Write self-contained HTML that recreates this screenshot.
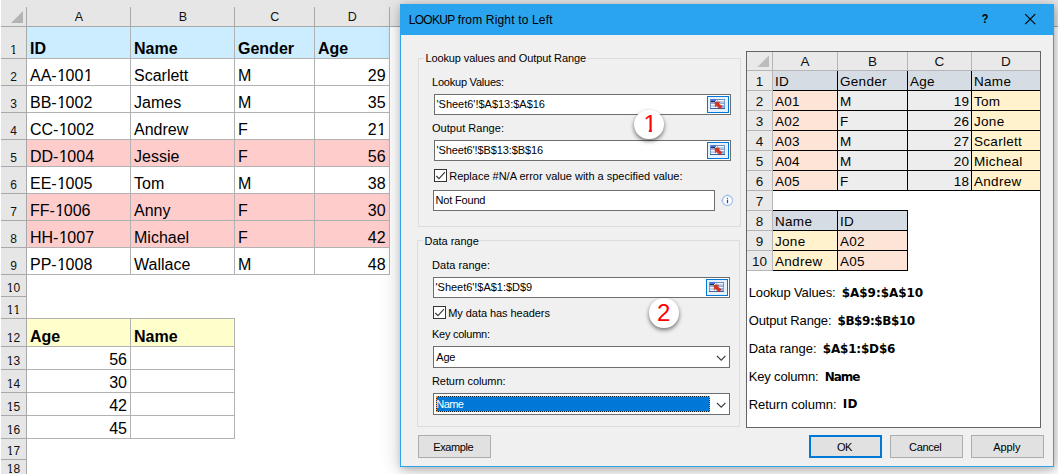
<!DOCTYPE html>
<html lang="en"><head><meta charset="utf-8"><title>LOOKUP from Right to Left</title>
<style>
html,body{margin:0;padding:0}
body{width:1058px;height:474px;position:relative;overflow:hidden;background:#fff;font-family:"Liberation Sans",sans-serif;color:#000}
.a{position:absolute;box-sizing:content-box}
.t{position:absolute;white-space:pre}
.o{display:inline-block;position:relative;left:.6px;clip-path:polygon(0 0,100% 0,100% 10.5px,5.6px 10.5px,5.6px 100%,3.2px 100%,3.2px 10.5px,0 10.5px)}
</style></head>
<body>
<div class="a" style="left:1px;top:0px;width:1057px;height:26px;background:#e6e6e6;"></div>
<div class="a" style="left:1px;top:26px;width:1057px;height:1px;background:#a9a9a9;"></div>
<div class="a" style="left:1px;top:27px;width:25px;height:447px;background:#e6e6e6;"></div>
<div class="a" style="left:26px;top:7px;width:1px;height:467px;background:#a9a9a9;"></div>
<svg class="a" style="left:10px;top:10px" width="14" height="14"><polygon points="13,1 13,13 1,13" fill="#b3b3b3"/></svg>
<div class="a" style="left:130px;top:7px;width:1px;height:19px;background:#a9a9a9;"></div>
<div class="a" style="left:234px;top:7px;width:1px;height:19px;background:#a9a9a9;"></div>
<div class="a" style="left:314px;top:7px;width:1px;height:19px;background:#a9a9a9;"></div>
<div class="a" style="left:389px;top:7px;width:1px;height:19px;background:#a9a9a9;"></div>
<span class="t" style='left:74.63px;top:10.82px;font-size:12.5px;line-height:12.5px;color:#111;'>A</span>
<span class="t" style='left:178.63px;top:10.82px;font-size:12.5px;line-height:12.5px;color:#111;'>B</span>
<span class="t" style='left:270.28px;top:10.82px;font-size:12.5px;line-height:12.5px;color:#111;'>C</span>
<span class="t" style='left:347.78px;top:10.82px;font-size:12.5px;line-height:12.5px;color:#111;'>D</span>
<div class="a" style="left:1px;top:58px;width:25px;height:1px;background:#a9a9a9;"></div>
<div class="a" style="left:1px;top:85px;width:25px;height:1px;background:#a9a9a9;"></div>
<div class="a" style="left:1px;top:112px;width:25px;height:1px;background:#a9a9a9;"></div>
<div class="a" style="left:1px;top:139px;width:25px;height:1px;background:#a9a9a9;"></div>
<div class="a" style="left:1px;top:166px;width:25px;height:1px;background:#a9a9a9;"></div>
<div class="a" style="left:1px;top:193px;width:25px;height:1px;background:#a9a9a9;"></div>
<div class="a" style="left:1px;top:220px;width:25px;height:1px;background:#a9a9a9;"></div>
<div class="a" style="left:1px;top:247px;width:25px;height:1px;background:#a9a9a9;"></div>
<div class="a" style="left:1px;top:274px;width:25px;height:1px;background:#a9a9a9;"></div>
<div class="a" style="left:1px;top:296px;width:25px;height:1px;background:#a9a9a9;"></div>
<div class="a" style="left:1px;top:318px;width:25px;height:1px;background:#a9a9a9;"></div>
<div class="a" style="left:1px;top:346px;width:25px;height:1px;background:#a9a9a9;"></div>
<div class="a" style="left:1px;top:369px;width:25px;height:1px;background:#a9a9a9;"></div>
<div class="a" style="left:1px;top:392px;width:25px;height:1px;background:#a9a9a9;"></div>
<div class="a" style="left:1px;top:415px;width:25px;height:1px;background:#a9a9a9;"></div>
<div class="a" style="left:1px;top:438px;width:25px;height:1px;background:#a9a9a9;"></div>
<div class="a" style="left:1px;top:459px;width:25px;height:1px;background:#a9a9a9;"></div>
<span class="t" style='left:10.16px;top:43.84px;font-size:12px;line-height:12px;color:#111;clip-path:polygon(0 0,100% 0,100% 9.1px,5px 9.1px,5px 100%,2.6px 100%,2.6px 9.1px,0 9.1px);'>1</span>
<span class="t" style='left:10.16px;top:70.84px;font-size:12px;line-height:12px;color:#111;'>2</span>
<span class="t" style='left:10.16px;top:97.84px;font-size:12px;line-height:12px;color:#111;'>3</span>
<span class="t" style='left:10.16px;top:124.84px;font-size:12px;line-height:12px;color:#111;'>4</span>
<span class="t" style='left:10.16px;top:151.84px;font-size:12px;line-height:12px;color:#111;'>5</span>
<span class="t" style='left:10.16px;top:178.84px;font-size:12px;line-height:12px;color:#111;'>6</span>
<span class="t" style='left:10.16px;top:205.84px;font-size:12px;line-height:12px;color:#111;'>7</span>
<span class="t" style='left:10.16px;top:232.84px;font-size:12px;line-height:12px;color:#111;'>8</span>
<span class="t" style='left:10.16px;top:259.84px;font-size:12px;line-height:12px;color:#111;'>9</span>
<span class="t" style='left:6.83px;top:281.84px;font-size:12px;line-height:12px;color:#111;clip-path:polygon(0 0,100% 0,100% 9.1px,5px 9.1px,5px 100%,2.6px 100%,2.6px 9.1px,0 9.1px);'>1</span>
<span class="t" style='left:13.50px;top:281.84px;font-size:12px;line-height:12px;color:#111;'>0</span>
<span class="t" style='left:6.83px;top:303.84px;font-size:12px;line-height:12px;color:#111;clip-path:polygon(0 0,100% 0,100% 9.1px,5px 9.1px,5px 100%,2.6px 100%,2.6px 9.1px,0 9.1px);'>1</span>
<span class="t" style='left:13.50px;top:303.84px;font-size:12px;line-height:12px;color:#111;clip-path:polygon(0 0,100% 0,100% 9.1px,5px 9.1px,5px 100%,2.6px 100%,2.6px 9.1px,0 9.1px);'>1</span>
<span class="t" style='left:6.83px;top:331.84px;font-size:12px;line-height:12px;color:#111;clip-path:polygon(0 0,100% 0,100% 9.1px,5px 9.1px,5px 100%,2.6px 100%,2.6px 9.1px,0 9.1px);'>1</span>
<span class="t" style='left:13.50px;top:331.84px;font-size:12px;line-height:12px;color:#111;'>2</span>
<span class="t" style='left:6.83px;top:354.84px;font-size:12px;line-height:12px;color:#111;clip-path:polygon(0 0,100% 0,100% 9.1px,5px 9.1px,5px 100%,2.6px 100%,2.6px 9.1px,0 9.1px);'>1</span>
<span class="t" style='left:13.50px;top:354.84px;font-size:12px;line-height:12px;color:#111;'>3</span>
<span class="t" style='left:6.83px;top:377.84px;font-size:12px;line-height:12px;color:#111;clip-path:polygon(0 0,100% 0,100% 9.1px,5px 9.1px,5px 100%,2.6px 100%,2.6px 9.1px,0 9.1px);'>1</span>
<span class="t" style='left:13.50px;top:377.84px;font-size:12px;line-height:12px;color:#111;'>4</span>
<span class="t" style='left:6.83px;top:400.84px;font-size:12px;line-height:12px;color:#111;clip-path:polygon(0 0,100% 0,100% 9.1px,5px 9.1px,5px 100%,2.6px 100%,2.6px 9.1px,0 9.1px);'>1</span>
<span class="t" style='left:13.50px;top:400.84px;font-size:12px;line-height:12px;color:#111;'>5</span>
<span class="t" style='left:6.83px;top:423.84px;font-size:12px;line-height:12px;color:#111;clip-path:polygon(0 0,100% 0,100% 9.1px,5px 9.1px,5px 100%,2.6px 100%,2.6px 9.1px,0 9.1px);'>1</span>
<span class="t" style='left:13.50px;top:423.84px;font-size:12px;line-height:12px;color:#111;'>6</span>
<span class="t" style='left:6.83px;top:444.84px;font-size:12px;line-height:12px;color:#111;clip-path:polygon(0 0,100% 0,100% 9.1px,5px 9.1px,5px 100%,2.6px 100%,2.6px 9.1px,0 9.1px);'>1</span>
<span class="t" style='left:13.50px;top:444.84px;font-size:12px;line-height:12px;color:#111;'>7</span>
<span class="t" style='left:6.83px;top:462.84px;font-size:12px;line-height:12px;color:#111;clip-path:polygon(0 0,100% 0,100% 9.1px,5px 9.1px,5px 100%,2.6px 100%,2.6px 9.1px,0 9.1px);'>1</span>
<span class="t" style='left:13.50px;top:462.84px;font-size:12px;line-height:12px;color:#111;'>8</span>
<div class="a" style="left:27px;top:27px;width:362px;height:31px;background:#ccecff;"></div>
<div class="a" style="left:27px;top:140px;width:362px;height:26px;background:#ffcccc;"></div>
<div class="a" style="left:27px;top:194px;width:362px;height:26px;background:#ffcccc;"></div>
<div class="a" style="left:27px;top:221px;width:362px;height:26px;background:#ffcccc;"></div>
<div class="a" style="left:27px;top:58px;width:363px;height:1px;background:#b2b2b2;"></div>
<div class="a" style="left:27px;top:85px;width:363px;height:1px;background:#b2b2b2;"></div>
<div class="a" style="left:27px;top:112px;width:363px;height:1px;background:#b2b2b2;"></div>
<div class="a" style="left:27px;top:139px;width:363px;height:1px;background:#b2b2b2;"></div>
<div class="a" style="left:27px;top:166px;width:363px;height:1px;background:#b2b2b2;"></div>
<div class="a" style="left:27px;top:193px;width:363px;height:1px;background:#b2b2b2;"></div>
<div class="a" style="left:27px;top:220px;width:363px;height:1px;background:#b2b2b2;"></div>
<div class="a" style="left:27px;top:247px;width:363px;height:1px;background:#b2b2b2;"></div>
<div class="a" style="left:27px;top:274px;width:363px;height:1px;background:#b2b2b2;"></div>
<div class="a" style="left:130px;top:27px;width:1px;height:248px;background:#b2b2b2;"></div>
<div class="a" style="left:234px;top:27px;width:1px;height:248px;background:#b2b2b2;"></div>
<div class="a" style="left:314px;top:27px;width:1px;height:248px;background:#b2b2b2;"></div>
<div class="a" style="left:389px;top:27px;width:1px;height:248px;background:#b2b2b2;"></div>
<div class="a" style="left:27px;top:319px;width:207px;height:27px;background:#ffffcc;"></div>
<div class="a" style="left:27px;top:318px;width:208px;height:1px;background:#b2b2b2;"></div>
<div class="a" style="left:27px;top:346px;width:208px;height:1px;background:#b2b2b2;"></div>
<div class="a" style="left:27px;top:369px;width:208px;height:1px;background:#b2b2b2;"></div>
<div class="a" style="left:27px;top:392px;width:208px;height:1px;background:#b2b2b2;"></div>
<div class="a" style="left:27px;top:415px;width:208px;height:1px;background:#b2b2b2;"></div>
<div class="a" style="left:27px;top:438px;width:208px;height:1px;background:#b2b2b2;"></div>
<div class="a" style="left:130px;top:318px;width:1px;height:121px;background:#b2b2b2;"></div>
<div class="a" style="left:234px;top:318px;width:1px;height:121px;background:#b2b2b2;"></div>
<span class="t" style='left:30.00px;top:41.46px;font-size:16px;line-height:16px;font-weight:bold;'>ID</span>
<span class="t" style='left:134.00px;top:41.46px;font-size:16px;line-height:16px;font-weight:bold;'>Name</span>
<span class="t" style='left:238.00px;top:41.46px;font-size:16px;line-height:16px;font-weight:bold;'>Gender</span>
<span class="t" style='left:318.00px;top:41.46px;font-size:16px;line-height:16px;font-weight:bold;'>Age</span>
<span class="t" style='left:30.00px;top:68.46px;font-size:16px;line-height:16px;'>AA-<span class="o">1</span>00<span class="o">1</span></span>
<span class="t" style='left:134.00px;top:68.46px;font-size:16px;line-height:16px;'>Scarlett</span>
<span class="t" style='left:238.00px;top:68.46px;font-size:16px;line-height:16px;'>M</span>
<span class="t" style='left:367.80px;top:68.46px;font-size:16px;line-height:16px;'>29</span>
<span class="t" style='left:30.00px;top:95.46px;font-size:16px;line-height:16px;'>BB-<span class="o">1</span>002</span>
<span class="t" style='left:134.00px;top:95.46px;font-size:16px;line-height:16px;'>James</span>
<span class="t" style='left:238.00px;top:95.46px;font-size:16px;line-height:16px;'>M</span>
<span class="t" style='left:367.80px;top:95.46px;font-size:16px;line-height:16px;'>35</span>
<span class="t" style='left:30.00px;top:122.46px;font-size:16px;line-height:16px;'>CC-<span class="o">1</span>002</span>
<span class="t" style='left:134.00px;top:122.46px;font-size:16px;line-height:16px;'>Andrew</span>
<span class="t" style='left:238.00px;top:122.46px;font-size:16px;line-height:16px;'>F</span>
<span class="t" style='left:367.80px;top:122.46px;font-size:16px;line-height:16px;'>2<span class="o">1</span></span>
<span class="t" style='left:30.00px;top:149.46px;font-size:16px;line-height:16px;'>DD-<span class="o">1</span>004</span>
<span class="t" style='left:134.00px;top:149.46px;font-size:16px;line-height:16px;'>Jessie</span>
<span class="t" style='left:238.00px;top:149.46px;font-size:16px;line-height:16px;'>F</span>
<span class="t" style='left:367.80px;top:149.46px;font-size:16px;line-height:16px;'>56</span>
<span class="t" style='left:30.00px;top:176.46px;font-size:16px;line-height:16px;'>EE-<span class="o">1</span>005</span>
<span class="t" style='left:134.00px;top:176.46px;font-size:16px;line-height:16px;'>Tom</span>
<span class="t" style='left:238.00px;top:176.46px;font-size:16px;line-height:16px;'>M</span>
<span class="t" style='left:367.80px;top:176.46px;font-size:16px;line-height:16px;'>38</span>
<span class="t" style='left:30.00px;top:203.46px;font-size:16px;line-height:16px;'>FF-<span class="o">1</span>006</span>
<span class="t" style='left:134.00px;top:203.46px;font-size:16px;line-height:16px;'>Anny</span>
<span class="t" style='left:238.00px;top:203.46px;font-size:16px;line-height:16px;'>F</span>
<span class="t" style='left:367.80px;top:203.46px;font-size:16px;line-height:16px;'>30</span>
<span class="t" style='left:30.00px;top:230.46px;font-size:16px;line-height:16px;'>HH-<span class="o">1</span>007</span>
<span class="t" style='left:134.00px;top:230.46px;font-size:16px;line-height:16px;'>Michael</span>
<span class="t" style='left:238.00px;top:230.46px;font-size:16px;line-height:16px;'>F</span>
<span class="t" style='left:367.80px;top:230.46px;font-size:16px;line-height:16px;'>42</span>
<span class="t" style='left:30.00px;top:257.46px;font-size:16px;line-height:16px;'>PP-<span class="o">1</span>008</span>
<span class="t" style='left:134.00px;top:257.46px;font-size:16px;line-height:16px;'>Wallace</span>
<span class="t" style='left:238.00px;top:257.46px;font-size:16px;line-height:16px;'>M</span>
<span class="t" style='left:367.80px;top:257.46px;font-size:16px;line-height:16px;'>48</span>
<span class="t" style='left:30.00px;top:329.46px;font-size:16px;line-height:16px;font-weight:bold;'>Age</span>
<span class="t" style='left:134.00px;top:329.46px;font-size:16px;line-height:16px;font-weight:bold;'>Name</span>
<span class="t" style='left:109.20px;top:352.46px;font-size:16px;line-height:16px;'>56</span>
<span class="t" style='left:109.20px;top:375.46px;font-size:16px;line-height:16px;'>30</span>
<span class="t" style='left:109.20px;top:398.46px;font-size:16px;line-height:16px;'>42</span>
<span class="t" style='left:109.20px;top:421.46px;font-size:16px;line-height:16px;'>45</span>
<div class="a" style="left:400px;top:4px;width:652px;height:461px;border:1px solid #2ba4ef;background:#f0f0f0;box-shadow:0 3px 18px 0 rgba(0,0,0,.22),1px 2px 7px 0 rgba(0,0,0,.2)"></div>
<div class="a" style="left:401px;top:5px;width:652px;height:30px;background:#2ba4ef;"></div>
<span class="t" style='left:408.76px;top:13.84px;font-size:12px;line-height:12px;letter-spacing:-0.707px;'>LOOKUP</span>
<span class="t" style='left:457.66px;top:13.84px;font-size:12px;line-height:12px;letter-spacing:0.167px;'>from Right to Left</span>
<span class="t" style='left:980.98px;top:12.47px;font-size:13.5px;line-height:13.5px;font-weight:bold;transform:scaleX(.8);'>?</span>
<svg class="a" style="left:1023px;top:12px" width="14" height="14"><path d="M2.2 2.2 L12.2 12.2 M12.2 2.2 L2.2 12.2" stroke="#000" stroke-width="1.15" fill="none"/></svg>
<div class="a" style="left:418px;top:58px;width:321px;height:167px;border:1px solid #dcdcdc;background:transparent;"></div>
<div class="a" style="left:417px;top:240px;width:321px;height:185px;border:1px solid #dcdcdc;background:transparent;"></div>
<div class="a" style="left:424px;top:52px;width:163px;height:12px;background:#f0f0f0;"></div>
<div class="a" style="left:423px;top:234px;width:56px;height:12px;background:#f0f0f0;"></div>
<span class="t" style='left:425.40px;top:52.69px;font-size:11px;line-height:11px;letter-spacing:-0.111px;'>Lookup values and Output Range</span>
<span class="t" style='left:424.50px;top:236.09px;font-size:11px;line-height:11px;letter-spacing:-0.016px;'>Data range</span>
<div class="a" style="left:434px;top:94px;width:295px;height:19px;border:1px solid #6e6e6e;background:#fff;"></div>
<div class="a" style="left:434px;top:140px;width:295px;height:19px;border:1px solid #6e6e6e;background:#fff;"></div>
<div class="a" style="left:433px;top:190px;width:280px;height:19px;border:1px solid #6e6e6e;background:#fff;"></div>
<div class="a" style="left:433px;top:277px;width:295px;height:19px;border:1px solid #6e6e6e;background:#fff;"></div>
<div class="a" style="left:433px;top:346px;width:295px;height:20px;border:1px solid #6e6e6e;background:#fff;"></div>
<div class="a" style="left:433px;top:393px;width:295px;height:20px;border:1px solid #6e6e6e;background:#fff;"></div>
<span class="t" style='left:432.00px;top:76.69px;font-size:11px;line-height:11px;letter-spacing:-0.219px;'>Lookup Values:</span>
<span class="t" style='left:436.50px;top:98.69px;font-size:11px;line-height:11px;letter-spacing:-0.016px;'>'Sheet6'!$A$13:$A$16</span>
<span class="t" style='left:432.00px;top:122.69px;font-size:11px;line-height:11px;letter-spacing:0.036px;'>Output Range:</span>
<span class="t" style='left:436.50px;top:144.69px;font-size:11px;line-height:11px;letter-spacing:-0.121px;'>'Sheet6'!$B$13:$B$16</span>
<span class="t" style='left:449.20px;top:170.69px;font-size:11px;line-height:11px;letter-spacing:-0.006px;'>Replace #N/A error value with a specified value:</span>
<span class="t" style='left:435.50px;top:194.69px;font-size:11px;line-height:11px;letter-spacing:-0.173px;'>Not Found</span>
<span class="t" style='left:432.00px;top:259.69px;font-size:11px;line-height:11px;letter-spacing:0.051px;'>Data range:</span>
<span class="t" style='left:435.50px;top:281.69px;font-size:11px;line-height:11px;letter-spacing:-0.028px;'>'Sheet6'!$A$1:$D$9</span>
<span class="t" style='left:448.20px;top:307.69px;font-size:11px;line-height:11px;letter-spacing:-0.052px;'>My data has headers</span>
<span class="t" style='left:432.00px;top:328.69px;font-size:11px;line-height:11px;letter-spacing:-0.254px;'>Key column:</span>
<span class="t" style='left:436.31px;top:351.69px;font-size:11px;line-height:11px;letter-spacing:-0.194px;'>Age</span>
<span class="t" style='left:432.00px;top:375.69px;font-size:11px;line-height:11px;letter-spacing:-0.085px;'>Return column:</span>
<div class="a" style="left:436px;top:396px;width:274px;height:16px;background:#0078d7;"></div>
<div class="a" style="left:436px;top:396px;width:272px;height:14px;border:1px solid #222"></div><div class="a" style="left:436px;top:396px;width:272px;height:14px;border:1px dotted #ff9a3c"></div>
<span class="t" style='left:436.31px;top:398.69px;font-size:11px;line-height:11px;color:#fff;letter-spacing:-0.551px;'>Name</span>
<svg class="a" style="left:434px;top:169px" width="13" height="13"><rect x="0.5" y="0.5" width="12" height="12" fill="#fff" stroke="#333"/><path d="M2.3 7 L5 9.7 L10.9 3.2" fill="none" stroke="#3c3c3c" stroke-width="1.2"/></svg>
<svg class="a" style="left:433px;top:306px" width="13" height="13"><rect x="0.5" y="0.5" width="12" height="12" fill="#fff" stroke="#333"/><path d="M2.3 7 L5 9.7 L10.9 3.2" fill="none" stroke="#3c3c3c" stroke-width="1.2"/></svg>
<svg class="a" style="left:707px;top:96px" width="22" height="17">
<rect x="0.5" y="0.5" width="21" height="16" fill="#e5f1fb" stroke="#0078d7"/>
<rect x="3" y="3" width="15" height="10" fill="#f4f8fd"/>
<rect x="3" y="3" width="6" height="2" fill="#4478dc"/>
<rect x="3" y="5" width="5" height="1.4" fill="#1c2c5c"/>
<g fill="#6f8fc4"><rect x="9" y="3" width="9" height="1"/><rect x="3" y="7" width="15" height="0.9" opacity=".8"/><rect x="9" y="5.6" width="9" height="0.9"/><rect x="3" y="9.6" width="15" height="0.9" opacity=".8"/><rect x="3" y="3" width="0.9" height="10"/><rect x="10" y="3" width="0.8" height="10" opacity=".6"/><rect x="17.1" y="3" width="0.9" height="10"/></g>
<rect x="3" y="12" width="15" height="1" fill="#3f5f9f"/>
<rect x="14" y="9" width="4" height="3" fill="#7fa0dc" opacity=".7"/>
<path d="M8 6 L12.7 6.2 L11.5 7.5 L15.1 10.4 L12.8 13 L9.8 9.6 L8.3 11 Z" fill="#d9311d" stroke="#b3200f" stroke-width="0.4"/>
</svg>
<svg class="a" style="left:707px;top:142px" width="22" height="17">
<rect x="0.5" y="0.5" width="21" height="16" fill="#e5f1fb" stroke="#0078d7"/>
<rect x="3" y="3" width="15" height="10" fill="#f4f8fd"/>
<rect x="3" y="3" width="6" height="2" fill="#4478dc"/>
<rect x="3" y="5" width="5" height="1.4" fill="#1c2c5c"/>
<g fill="#6f8fc4"><rect x="9" y="3" width="9" height="1"/><rect x="3" y="7" width="15" height="0.9" opacity=".8"/><rect x="9" y="5.6" width="9" height="0.9"/><rect x="3" y="9.6" width="15" height="0.9" opacity=".8"/><rect x="3" y="3" width="0.9" height="10"/><rect x="10" y="3" width="0.8" height="10" opacity=".6"/><rect x="17.1" y="3" width="0.9" height="10"/></g>
<rect x="3" y="12" width="15" height="1" fill="#3f5f9f"/>
<rect x="14" y="9" width="4" height="3" fill="#7fa0dc" opacity=".7"/>
<path d="M8 6 L12.7 6.2 L11.5 7.5 L15.1 10.4 L12.8 13 L9.8 9.6 L8.3 11 Z" fill="#d9311d" stroke="#b3200f" stroke-width="0.4"/>
</svg>
<svg class="a" style="left:706px;top:279px" width="22" height="17">
<rect x="0.5" y="0.5" width="21" height="16" fill="#e5f1fb" stroke="#0078d7"/>
<rect x="3" y="3" width="15" height="10" fill="#f4f8fd"/>
<rect x="3" y="3" width="6" height="2" fill="#4478dc"/>
<rect x="3" y="5" width="5" height="1.4" fill="#1c2c5c"/>
<g fill="#6f8fc4"><rect x="9" y="3" width="9" height="1"/><rect x="3" y="7" width="15" height="0.9" opacity=".8"/><rect x="9" y="5.6" width="9" height="0.9"/><rect x="3" y="9.6" width="15" height="0.9" opacity=".8"/><rect x="3" y="3" width="0.9" height="10"/><rect x="10" y="3" width="0.8" height="10" opacity=".6"/><rect x="17.1" y="3" width="0.9" height="10"/></g>
<rect x="3" y="12" width="15" height="1" fill="#3f5f9f"/>
<rect x="14" y="9" width="4" height="3" fill="#7fa0dc" opacity=".7"/>
<path d="M8 6 L12.7 6.2 L11.5 7.5 L15.1 10.4 L12.8 13 L9.8 9.6 L8.3 11 Z" fill="#d9311d" stroke="#b3200f" stroke-width="0.4"/>
</svg>
<svg class="a" style="left:715.5px;top:355px" width="11" height="7"><path d="M1 1 L5.2 5.2 L9.4 1" fill="none" stroke="#404040" stroke-width="1.15"/></svg>
<svg class="a" style="left:715.5px;top:402px" width="11" height="7"><path d="M1 1 L5.2 5.2 L9.4 1" fill="none" stroke="#404040" stroke-width="1.15"/></svg>
<svg class="a" style="left:721px;top:194px" width="13" height="13"><rect x="5.6" y="0.4" width="2" height="1.6" fill="#a6c4ec"/><rect x="0.2" y="5.7" width="1.6" height="1.8" fill="#a6c4ec"/><circle cx="6.5" cy="6.5" r="5" fill="#fff" stroke="#a6c4ec" stroke-width="1.3"/><rect x="5.9" y="4" width="1.2" height="1.2" fill="#2a4a8a"/><rect x="5.9" y="5.9" width="1.2" height="3.3" fill="#2a4a8a"/></svg>
<div class="a" style="left:634.45px;top:109.75px;width:29.5px;height:29.5px;border-radius:50%;background:#fff;box-shadow:0 2px 4px rgba(0,0,0,.55)"></div>
<span class="t" style='left:643.62px;top:111.88px;font-size:24px;line-height:24px;color:#ff0000;clip-path:polygon(0 0,100% 0,100% 17.9px,8.2px 17.9px,8.2px 100%,5.2px 100%,5.2px 17.9px,0 17.9px);'>1</span>
<div class="a" style="left:649.45px;top:298.25px;width:29.5px;height:29.5px;border-radius:50%;background:#fff;box-shadow:0 2px 4px rgba(0,0,0,.55)"></div>
<span class="t" style='left:657.12px;top:301.28px;font-size:24px;line-height:24px;color:#ff0000;'>2</span>
<div class="a" style="left:418px;top:435px;width:71px;height:21px;border:1px solid #adadad;background:#e1e1e1;"></div>
<div class="a" style="left:809px;top:435px;width:69px;height:19px;border:2px solid #0078d7;background:#e1e1e1;"></div>
<div class="a" style="left:890px;top:435px;width:71px;height:21px;border:1px solid #adadad;background:#e1e1e1;"></div>
<div class="a" style="left:971px;top:435px;width:71px;height:21px;border:1px solid #adadad;background:#e1e1e1;"></div>
<span class="t" style='left:433.31px;top:441.69px;font-size:11px;line-height:11px;letter-spacing:-0.418px;'>Example</span>
<span class="t" style='left:836.90px;top:441.69px;font-size:11px;line-height:11px;letter-spacing:-0.516px;'>OK</span>
<span class="t" style='left:909.11px;top:441.69px;font-size:11px;line-height:11px;letter-spacing:-0.332px;'>Cancel</span>
<span class="t" style='left:993.30px;top:441.69px;font-size:11px;line-height:11px;letter-spacing:-0.085px;'>Apply</span>
<div class="a" style="left:746px;top:51px;width:293px;height:375px;border:1px solid #646464;background:#fff;"></div>
<div class="a" style="left:747px;top:52px;width:293px;height:18px;background:#e9e9e9;"></div>
<div class="a" style="left:747px;top:71px;width:25px;height:200px;background:#e9e9e9;"></div>
<svg class="a" style="left:756px;top:54px" width="14" height="14"><polygon points="13,1.5 13,13 1.5,13" fill="#bcbcbc"/></svg>
<div class="a" style="left:773px;top:71px;width:267px;height:19px;background:#d6dce4;"></div>
<div class="a" style="left:773px;top:91px;width:64px;height:99px;background:#fce4d6;"></div>
<div class="a" style="left:838px;top:91px;width:133px;height:99px;background:#ededed;"></div>
<div class="a" style="left:972px;top:91px;width:68px;height:99px;background:#fff2cc;"></div>
<div class="a" style="left:773px;top:211px;width:134px;height:19px;background:#d6dce4;"></div>
<div class="a" style="left:773px;top:231px;width:64px;height:39px;background:#fff2cc;"></div>
<div class="a" style="left:838px;top:231px;width:69px;height:39px;background:#fce4d6;"></div>
<div class="a" style="left:747px;top:70px;width:293px;height:1px;background:#b5b5b5;"></div>
<div class="a" style="left:772px;top:52px;width:1px;height:18px;background:#b5b5b5;"></div>
<div class="a" style="left:837px;top:52px;width:1px;height:18px;background:#b5b5b5;"></div>
<div class="a" style="left:907px;top:52px;width:1px;height:18px;background:#b5b5b5;"></div>
<div class="a" style="left:971px;top:52px;width:1px;height:18px;background:#b5b5b5;"></div>
<div class="a" style="left:772px;top:71px;width:1px;height:200px;background:#b5b5b5;"></div>
<div class="a" style="left:747px;top:90px;width:25px;height:1px;background:#b5b5b5;"></div>
<div class="a" style="left:747px;top:110px;width:25px;height:1px;background:#b5b5b5;"></div>
<div class="a" style="left:747px;top:130px;width:25px;height:1px;background:#b5b5b5;"></div>
<div class="a" style="left:747px;top:150px;width:25px;height:1px;background:#b5b5b5;"></div>
<div class="a" style="left:747px;top:170px;width:25px;height:1px;background:#b5b5b5;"></div>
<div class="a" style="left:747px;top:190px;width:25px;height:1px;background:#b5b5b5;"></div>
<div class="a" style="left:747px;top:210px;width:25px;height:1px;background:#b5b5b5;"></div>
<div class="a" style="left:747px;top:230px;width:25px;height:1px;background:#b5b5b5;"></div>
<div class="a" style="left:747px;top:250px;width:25px;height:1px;background:#b5b5b5;"></div>
<div class="a" style="left:747px;top:270px;width:25px;height:1px;background:#b5b5b5;"></div>
<div class="a" style="left:773px;top:90px;width:267px;height:1px;background:#000;"></div>
<div class="a" style="left:773px;top:110px;width:267px;height:1px;background:#000;"></div>
<div class="a" style="left:773px;top:130px;width:267px;height:1px;background:#000;"></div>
<div class="a" style="left:773px;top:150px;width:267px;height:1px;background:#000;"></div>
<div class="a" style="left:773px;top:170px;width:267px;height:1px;background:#000;"></div>
<div class="a" style="left:773px;top:190px;width:267px;height:1px;background:#000;"></div>
<div class="a" style="left:837px;top:71px;width:1px;height:120px;background:#000;"></div>
<div class="a" style="left:907px;top:71px;width:1px;height:120px;background:#000;"></div>
<div class="a" style="left:971px;top:71px;width:1px;height:120px;background:#000;"></div>
<div class="a" style="left:773px;top:210px;width:135px;height:1px;background:#000;"></div>
<div class="a" style="left:773px;top:230px;width:135px;height:1px;background:#000;"></div>
<div class="a" style="left:773px;top:250px;width:135px;height:1px;background:#000;"></div>
<div class="a" style="left:773px;top:270px;width:135px;height:1px;background:#000;"></div>
<div class="a" style="left:837px;top:210px;width:1px;height:61px;background:#000;"></div>
<div class="a" style="left:907px;top:210px;width:1px;height:61px;background:#000;"></div>
<span class="t" style='left:800.49px;top:55.17px;font-size:13.5px;line-height:13.5px;color:#111;'>A</span>
<span class="t" style='left:867.99px;top:55.17px;font-size:13.5px;line-height:13.5px;color:#111;'>B</span>
<span class="t" style='left:934.62px;top:55.17px;font-size:13.5px;line-height:13.5px;color:#111;'>C</span>
<span class="t" style='left:1001.12px;top:55.17px;font-size:13.5px;line-height:13.5px;color:#111;'>D</span>
<span class="t" style='left:755.74px;top:74.57px;font-size:13.5px;line-height:13.5px;color:#111;'>1</span>
<span class="t" style='left:755.74px;top:94.57px;font-size:13.5px;line-height:13.5px;color:#111;'>2</span>
<span class="t" style='left:755.74px;top:114.57px;font-size:13.5px;line-height:13.5px;color:#111;'>3</span>
<span class="t" style='left:755.74px;top:134.57px;font-size:13.5px;line-height:13.5px;color:#111;'>4</span>
<span class="t" style='left:755.74px;top:154.57px;font-size:13.5px;line-height:13.5px;color:#111;'>5</span>
<span class="t" style='left:755.74px;top:174.57px;font-size:13.5px;line-height:13.5px;color:#111;'>6</span>
<span class="t" style='left:755.74px;top:194.57px;font-size:13.5px;line-height:13.5px;color:#111;'>7</span>
<span class="t" style='left:755.74px;top:214.57px;font-size:13.5px;line-height:13.5px;color:#111;'>8</span>
<span class="t" style='left:755.74px;top:234.57px;font-size:13.5px;line-height:13.5px;color:#111;'>9</span>
<span class="t" style='left:751.98px;top:254.57px;font-size:13.5px;line-height:13.5px;color:#111;'>10</span>
<span class="t" style='left:775.00px;top:74.57px;font-size:13.5px;line-height:13.5px;letter-spacing:0.3px;'>ID</span>
<span class="t" style='left:840.00px;top:74.57px;font-size:13.5px;line-height:13.5px;letter-spacing:0.3px;'>Gender</span>
<span class="t" style='left:910.00px;top:74.57px;font-size:13.5px;line-height:13.5px;letter-spacing:0.3px;'>Age</span>
<span class="t" style='left:974.00px;top:74.57px;font-size:13.5px;line-height:13.5px;letter-spacing:0.3px;'>Name</span>
<span class="t" style='left:775.00px;top:94.57px;font-size:13.5px;line-height:13.5px;letter-spacing:0.3px;'>A01</span>
<span class="t" style='left:840.00px;top:94.57px;font-size:13.5px;line-height:13.5px;letter-spacing:0.3px;'>M</span>
<span class="t" style='left:953.77px;top:94.57px;font-size:13.5px;line-height:13.5px;letter-spacing:0.2px;'>19</span>
<span class="t" style='left:974.00px;top:94.57px;font-size:13.5px;line-height:13.5px;letter-spacing:0.3px;'>Tom</span>
<span class="t" style='left:775.00px;top:114.57px;font-size:13.5px;line-height:13.5px;letter-spacing:0.3px;'>A02</span>
<span class="t" style='left:840.00px;top:114.57px;font-size:13.5px;line-height:13.5px;letter-spacing:0.3px;'>F</span>
<span class="t" style='left:953.77px;top:114.57px;font-size:13.5px;line-height:13.5px;letter-spacing:0.2px;'>26</span>
<span class="t" style='left:974.00px;top:114.57px;font-size:13.5px;line-height:13.5px;letter-spacing:0.3px;'>Jone</span>
<span class="t" style='left:775.00px;top:134.57px;font-size:13.5px;line-height:13.5px;letter-spacing:0.3px;'>A03</span>
<span class="t" style='left:840.00px;top:134.57px;font-size:13.5px;line-height:13.5px;letter-spacing:0.3px;'>M</span>
<span class="t" style='left:953.77px;top:134.57px;font-size:13.5px;line-height:13.5px;letter-spacing:0.2px;'>27</span>
<span class="t" style='left:974.00px;top:134.57px;font-size:13.5px;line-height:13.5px;letter-spacing:0.3px;'>Scarlett</span>
<span class="t" style='left:775.00px;top:154.57px;font-size:13.5px;line-height:13.5px;letter-spacing:0.3px;'>A04</span>
<span class="t" style='left:840.00px;top:154.57px;font-size:13.5px;line-height:13.5px;letter-spacing:0.3px;'>M</span>
<span class="t" style='left:953.77px;top:154.57px;font-size:13.5px;line-height:13.5px;letter-spacing:0.2px;'>20</span>
<span class="t" style='left:974.00px;top:154.57px;font-size:13.5px;line-height:13.5px;letter-spacing:0.3px;'>Micheal</span>
<span class="t" style='left:775.00px;top:174.57px;font-size:13.5px;line-height:13.5px;letter-spacing:0.3px;'>A05</span>
<span class="t" style='left:840.00px;top:174.57px;font-size:13.5px;line-height:13.5px;letter-spacing:0.3px;'>F</span>
<span class="t" style='left:953.77px;top:174.57px;font-size:13.5px;line-height:13.5px;letter-spacing:0.2px;'>18</span>
<span class="t" style='left:974.00px;top:174.57px;font-size:13.5px;line-height:13.5px;letter-spacing:0.3px;'>Andrew</span>
<span class="t" style='left:775.00px;top:214.57px;font-size:13.5px;line-height:13.5px;letter-spacing:0.3px;'>Name</span>
<span class="t" style='left:840.00px;top:214.57px;font-size:13.5px;line-height:13.5px;letter-spacing:0.3px;'>ID</span>
<span class="t" style='left:775.00px;top:234.57px;font-size:13.5px;line-height:13.5px;letter-spacing:0.3px;'>Jone</span>
<span class="t" style='left:840.00px;top:234.57px;font-size:13.5px;line-height:13.5px;letter-spacing:0.3px;'>A02</span>
<span class="t" style='left:775.00px;top:254.57px;font-size:13.5px;line-height:13.5px;letter-spacing:0.3px;'>Andrew</span>
<span class="t" style='left:840.00px;top:254.57px;font-size:13.5px;line-height:13.5px;letter-spacing:0.3px;'>A05</span>
<span class="t" style='left:748.71px;top:286.30px;font-size:13px;line-height:13px;letter-spacing:-0.131px;'>Lookup Values:</span>
<span class="t" style='left:841.76px;top:287.14px;font-size:12px;line-height:12px;font-weight:bold;font-family:"DejaVu Sans", "Liberation Sans", sans-serif;letter-spacing:-0.039px;'>$A$9:$A$10</span>
<span class="t" style='left:748.71px;top:314.00px;font-size:13px;line-height:13px;letter-spacing:-0.141px;'>Output Range:</span>
<span class="t" style='left:837.46px;top:314.84px;font-size:12px;line-height:12px;font-weight:bold;font-family:"DejaVu Sans", "Liberation Sans", sans-serif;letter-spacing:-0.419px;'>$B$9:$B$10</span>
<span class="t" style='left:748.71px;top:341.80px;font-size:13px;line-height:13px;letter-spacing:0.003px;'>Data range:</span>
<span class="t" style='left:822.76px;top:342.64px;font-size:12px;line-height:12px;font-weight:bold;font-family:"DejaVu Sans", "Liberation Sans", sans-serif;letter-spacing:-0.185px;'>$A$1:$D$6</span>
<span class="t" style='left:748.71px;top:369.70px;font-size:13px;line-height:13px;letter-spacing:-0.168px;'>Key column:</span>
<span class="t" style='left:824.66px;top:370.54px;font-size:12px;line-height:12px;font-weight:bold;font-family:"DejaVu Sans", "Liberation Sans", sans-serif;letter-spacing:-1.039px;'>Name</span>
<span class="t" style='left:748.71px;top:397.60px;font-size:13px;line-height:13px;letter-spacing:-0.022px;'>Return column:</span>
<span class="t" style='left:842.66px;top:398.44px;font-size:12px;line-height:12px;font-weight:bold;font-family:"DejaVu Sans", "Liberation Sans", sans-serif;letter-spacing:0.442px;'>ID</span>
</body></html>
